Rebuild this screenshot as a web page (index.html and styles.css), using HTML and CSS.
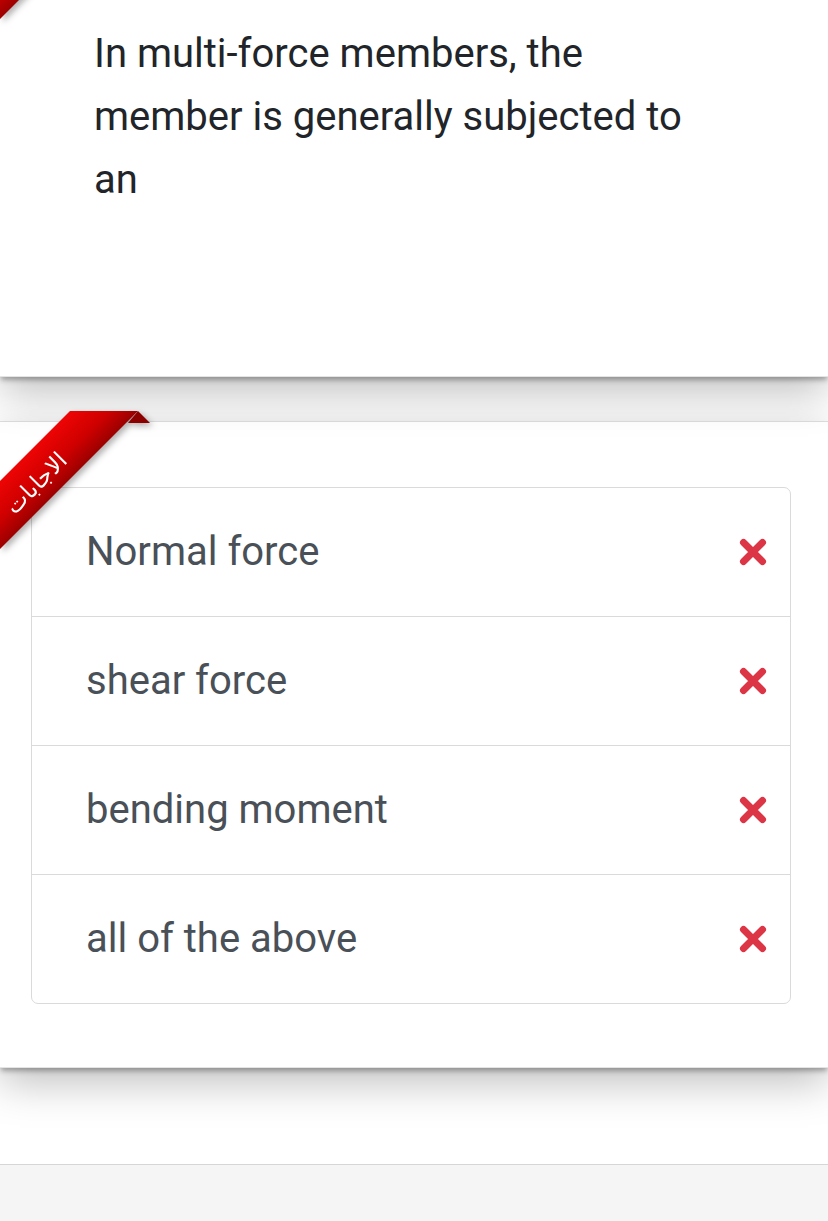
FILE: index.html
```html
<!DOCTYPE html>
<html lang="en">
<head>
<meta charset="utf-8">
<title>Question</title>
<link rel="stylesheet" href="styles.css">
</head>
<body>
<main class="page">
  <section class="card card-question">
    <svg class="ribbon" width="160" height="150" viewBox="0 0 160 150" aria-hidden="true">
      <defs>
        <linearGradient id="rg1" gradientUnits="userSpaceOnUse" x1="35" y1="35" x2="69" y2="69">
          <stop offset="0" stop-color="#ee0404"/>
          <stop offset="0.55" stop-color="#d00000"/>
          <stop offset="1" stop-color="#9c0000"/>
        </linearGradient>
      </defs>
      <polygon points="138,0 150,12 128,12" fill="#8c0000"/>
      <polygon points="70,0 138,0 0,138 0,70" fill="url(#rg1)"/>
    </svg>
    <p class="question">In multi-force members, the member is generally subjected to an</p>
  </section>

  <section class="card card-answers">
    <svg class="ribbon" width="160" height="150" viewBox="0 0 160 150">
      <defs>
        <linearGradient id="rg2" gradientUnits="userSpaceOnUse" x1="35" y1="35" x2="69" y2="69">
          <stop offset="0" stop-color="#ee0404"/>
          <stop offset="0.55" stop-color="#d00000"/>
          <stop offset="1" stop-color="#9c0000"/>
        </linearGradient>
      </defs>
      <polygon points="138,0 150,12 128,12" fill="#8c0000"/>
      <polygon points="70,0 138,0 0,138 0,70" fill="url(#rg2)"/>
      <text x="36" y="72" transform="rotate(-45 36 72)" text-anchor="middle" dominant-baseline="central" class="ribbon-text">الاجابات</text>
    </svg>
    <ul class="answers">
      <li class="answer"><span class="answer-text">Normal force</span>
        <svg class="icon-x" width="28" height="28" viewBox="0 0 28 28"><path d="M4.5 4.5 L23.5 23.5 M23.5 4.5 L4.5 23.5"/></svg></li>
      <li class="answer"><span class="answer-text">shear force</span>
        <svg class="icon-x" width="28" height="28" viewBox="0 0 28 28"><path d="M4.5 4.5 L23.5 23.5 M23.5 4.5 L4.5 23.5"/></svg></li>
      <li class="answer"><span class="answer-text">bending moment</span>
        <svg class="icon-x" width="28" height="28" viewBox="0 0 28 28"><path d="M4.5 4.5 L23.5 23.5 M23.5 4.5 L4.5 23.5"/></svg></li>
      <li class="answer"><span class="answer-text">all of the above</span>
        <svg class="icon-x" width="28" height="28" viewBox="0 0 28 28"><path d="M4.5 4.5 L23.5 23.5 M23.5 4.5 L4.5 23.5"/></svg></li>
    </ul>
  </section>

  <footer class="footer"></footer>
</main>
</body>
</html>
```

FILE: styles.css
```css
html, body {
  margin: 0;
  padding: 0;
  background: #ffffff;
  font-family: Roboto, "Noto Sans", sans-serif;
  overflow: hidden;
}

.page {
  margin-top: -108px;
  display: flex;
  flex-direction: column;
}

.card {
  position: relative;
  background: #ffffff;
  border-bottom: 1px solid #e4e4e4;
  box-shadow: 0 4px 5px -1px rgba(0, 0, 0, 0.3), 0 14px 40px rgba(0, 0, 0, 0.26);
}

.ribbon {
  position: absolute;
  left: 0;
  top: -11px;
  overflow: visible;
  filter: drop-shadow(3px 3px 3px rgba(0, 0, 0, 0.3));
  z-index: 2;
}

.ribbon-text {
  fill: #ffffff;
  font-family: "DejaVu Sans", sans-serif;
  font-size: 23px;
}

.card-question {
  padding: 130px 100px 165px 94px;
  z-index: 1;
}

.question {
  margin: 0;
  max-width: 630px;
  font-size: 40px;
  line-height: 63px;
  color: #212529;
}

.card-answers {
  margin-top: 44px;
  border-top: 1px solid #dcdcdc;
  padding: 65px 37px 63px 31px;
  background: #ffffff;
}

.answers {
  list-style: none;
  margin: 0;
  padding: 0;
  border: 1px solid #dadada;
  border-radius: 7px;
  background: #ffffff;
}

.answer {
  display: flex;
  align-items: center;
  justify-content: space-between;
  padding: 40px 23px 40px 54px;
  line-height: 48px;
  font-size: 40px;
  color: #495057;
}

.answer + .answer {
  border-top: 1px solid #dadada;
}

.icon-x path {
  fill: none;
  stroke: #dc3545;
  stroke-width: 7;
  stroke-linecap: round;
}

.footer {
  margin-top: 96px;
  height: 200px;
  background: #f5f5f5;
  border-top: 1px solid #d6d6d6;
}
```
